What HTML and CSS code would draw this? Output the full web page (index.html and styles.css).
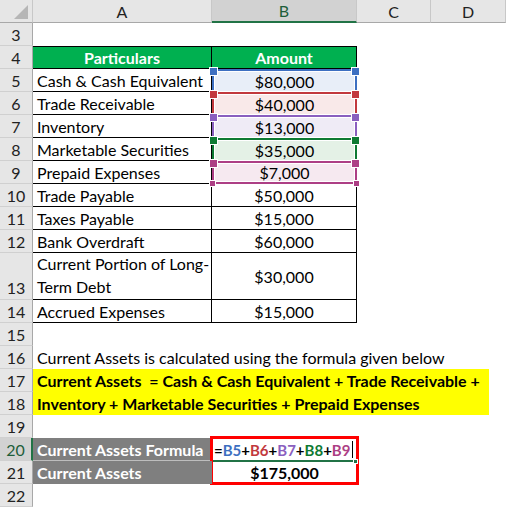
FILE: index.html
```html
<!DOCTYPE html>
<html>
<head>
<meta charset="utf-8">
<link rel="stylesheet" href="styles.css">
</head>
<body>
<div class="sheet">
  <div class="ch corner"><svg class="tri" width="16" height="15" viewBox="0 0 16 15"><polygon points="15,0 15,14 1,14" fill="#b6b6b6"/></svg></div>
  <div class="ch">A</div>
  <div class="ch sel">B</div>
  <div class="ch">C</div>
  <div class="ch">D</div>

  <div class="rh">3</div><div class="blank4"></div>

  <div class="rh">4</div>
  <div class="c t hd top">Particulars</div>
  <div class="c t hd top">Amount</div>
  <div class="blank2"></div>

  <div class="rh">5</div>
  <div class="c t a">Cash &amp; Cash Equivalent</div>
  <div class="c t ref r1">$80,000</div>
  <div class="blank2"></div>

  <div class="rh">6</div>
  <div class="c t a">Trade Receivable</div>
  <div class="c t ref r2">$40,000</div>
  <div class="blank2"></div>

  <div class="rh">7</div>
  <div class="c t a">Inventory</div>
  <div class="c t ref r3">$13,000</div>
  <div class="blank2"></div>

  <div class="rh">8</div>
  <div class="c t a">Marketable Securities</div>
  <div class="c t ref r4">$35,000</div>
  <div class="blank2"></div>

  <div class="rh">9</div>
  <div class="c t a">Prepaid Expenses</div>
  <div class="c t ref r5 last">$7,000<span class="sq bl"></span><span class="sq br"></span></div>
  <div class="blank2"></div>

  <div class="rh">10</div>
  <div class="c t a">Trade Payable</div>
  <div class="c t b">$50,000</div>
  <div class="blank2"></div>

  <div class="rh">11</div>
  <div class="c t a">Taxes Payable</div>
  <div class="c t b">$15,000</div>
  <div class="blank2"></div>

  <div class="rh">12</div>
  <div class="c t a">Bank Overdraft</div>
  <div class="c t b">$60,000</div>
  <div class="blank2"></div>

  <div class="rh tall">13</div>
  <div class="c t a wrap">Current Portion of Long-<br>Term Debt</div>
  <div class="c t b">$30,000</div>
  <div class="blank2"></div>

  <div class="rh">14</div>
  <div class="c t a">Accrued Expenses</div>
  <div class="c t b">$15,000</div>
  <div class="blank2"></div>

  <div class="rh">15</div><div class="blank4"></div>

  <div class="rh">16</div>
  <div class="c a span4">Current Assets is calculated using the formula given below</div>

  <div class="rh">17</div>
  <div class="yband"><div class="yellow">Current Assets&nbsp; = Cash &amp; Cash Equivalent + Trade Receivable +<br>Inventory + Marketable Securities + Prepaid Expenses</div></div>
  <div class="rh">18</div>

  <div class="rh">19</div><div class="blank4"></div>

  <div class="rh sel">20</div>
  <div class="c gray g1">Current Assets Formula</div>
  <div class="redbox">
    <div class="formula"><span>=</span><span class="k1">B5</span><span>+</span><span class="k2">B6</span><span>+</span><span class="k3">B7</span><span>+</span><span class="k4">B8</span><span>+</span><span class="k5">B9</span><span class="caret"></span><span class="gsq"></span></div>
    <div class="total">$175,000</div>
  </div>
  <div class="blank2"></div>

  <div class="rh">21</div>
  <div class="c gray">Current Assets</div>
  <div class="blank2"></div>

  <div class="rh">22</div><div class="blank4"></div>
</div>
</body>
</html>
```
FILE: styles.css
```css
* { box-sizing: border-box; margin: 0; padding: 0; }
html, body { background: #fff; }
body {
  width: 506px;
  height: 507px;
  overflow: hidden;
  font-family: Lato, "Liberation Sans", sans-serif;
  font-size: 16px;
  color: #000;
}
.sheet {
  display: grid;
  grid-template-columns: 33px 179px 145px 74px 75px;
  grid-template-rows: 23px repeat(10, 23px) 47px repeat(9, 23px);
}
.ch {
  background: #e6e6e6;
  border-right: 1px solid #c8c8c8;
  border-bottom: 1px solid #a8a8a8;
  display: flex;
  align-items: center;
  justify-content: center;
  color: #222;
  font-size: 16px;
}
.ch.sel {
  background: #d2d2d2;
  border-bottom: 2px solid #217346;
  color: #1e5e3a;
}
.corner { position: relative; }
.tri { position: absolute; right: 3px; bottom: 2px; }
.rh {
  background: #e6e6e6;
  border-right: 1px solid #a8a8a8;
  border-bottom: 1px solid #d0d0d0;
  display: flex;
  align-items: center;
  justify-content: center;
  color: #222;
  font-size: 16px;
}
.rh.tall { align-items: flex-end; padding-bottom: 2px; }
.rh.sel {
  background: #d2d2d2;
  border-right: 2px solid #217346;
  color: #1e5e3a;
}
.blank4 { grid-column: span 4; }
.blank2 { grid-column: span 2; }
.c {
  display: flex;
  align-items: center;
  white-space: nowrap;
}
.t {
  border-right: 1px solid #000;
  border-bottom: 1px solid #000;
}
.top { border-top: 1px solid #000; }
.hd {
  background: #00b050;
  color: #fff;
  font-weight: 700;
  justify-content: center;
}
.a { padding-left: 4px; }
.b { justify-content: center; }
.wrap { line-height: 23px; align-items: flex-end; padding-bottom: 1px; }
.span4 { grid-column: span 4; }

.ref {
  position: relative;
  justify-content: center;
  border: 2px solid var(--c);
  border-bottom: 0;
  background: var(--f);
  box-shadow: inset 0 0 0 1px #fff;
}
.ref.last { border-bottom: 2px solid var(--c); }
.ref::before, .ref::after, .sq {
  content: "";
  position: absolute;
  width: 7px;
  height: 7px;
  background: var(--c);
  border: 1px solid #fff;
}
.ref::before { top: -4px; left: -5px; }
.ref::after { top: -4px; right: -5px; }
.sq.bl { bottom: -5px; left: -5px; }
.sq.br { bottom: -5px; right: -5px; }
.r1 { --c: #3d6fc1; --f: #e8eef8; }
.r2 { --c: #c2393e; --f: #f9e9e9; }
.r3 { --c: #8a5fbf; --f: #efebf6; }
.r4 { --c: #0e7a33; --f: #e4f1e6; }
.r5 { --c: #ad3f85; --f: #f6e9f0; }

.yband { grid-column: span 4; grid-row: span 2; }
.yellow {
  width: 456px;
  height: 46px;
  background: #ffff00;
  font-weight: 700;
  line-height: 23px;
  padding-left: 4px;
  padding-top: 0;
  white-space: nowrap;
}

.gray {
  background: #7f7f7f;
  color: #fff;
  font-weight: 700;
  padding-left: 4px;
}
.g1 { border-bottom: 1px solid #bdbdbd; }

.redbox {
  grid-row: span 2;
  margin: -2px -2px -1px -2px;
  border: 3px solid #ff0000;
  display: flex;
  flex-direction: column;
  background: #fff;
}
.formula {
  position: relative;
  height: 23px;
  border-bottom: 2px solid #217346;
  display: flex;
  align-items: center;
  padding-left: 1px;
  font-weight: 700;
  font-size: 15px;
}
.k1 { color: #3d6fc1; }
.k2 { color: #c2393e; }
.k3 { color: #8a5fbf; }
.k4 { color: #0e7a33; }
.k5 { color: #ad3f85; }
.caret {
  width: 1px;
  height: 17px;
  background: #000;
  margin-left: 2px;
}
.gsq {
  position: absolute;
  right: -2px;
  bottom: -4px;
  width: 5px;
  height: 5px;
  background: #217346;
  border: 1px solid #fff;
}
.total {
  flex: 1;
  display: flex;
  align-items: center;
  justify-content: center;
  font-weight: 700;
}
```
